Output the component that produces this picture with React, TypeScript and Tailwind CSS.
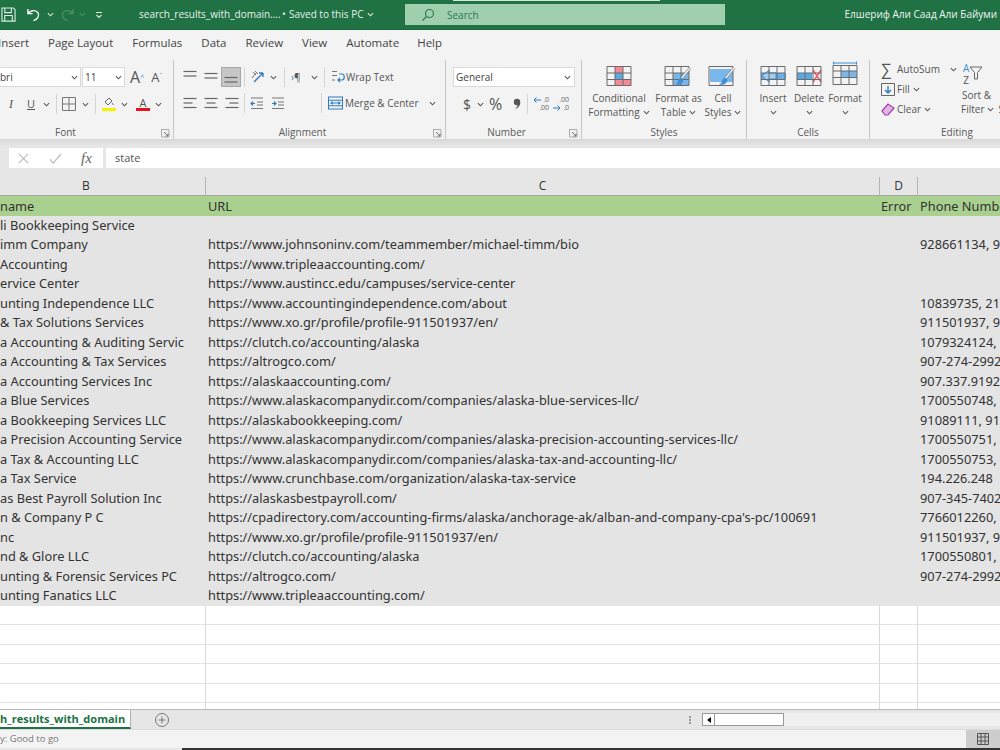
import React from "react";

const rows: [string, string, string][] = [
  ["li Bookkeeping Service", "", ""],
  ["imm Company", "https://www.johnsoninv.com/teammember/michael-timm/bio", "928661134, 9"],
  ["Accounting", "https://www.tripleaaccounting.com/", ""],
  ["ervice Center", "https://www.austincc.edu/campuses/service-center", ""],
  ["unting Independence LLC", "https://www.accountingindependence.com/about", "10839735, 21"],
  ["& Tax Solutions Services", "https://www.xo.gr/profile/profile-911501937/en/", "911501937, 9"],
  ["a Accounting & Auditing Servic", "https://clutch.co/accounting/alaska", "1079324124,"],
  ["a Accounting & Tax Services", "https://altrogco.com/", "907-274-2992"],
  ["a Accounting Services Inc", "https://alaskaaccounting.com/", "907.337.9192"],
  ["a Blue Services", "https://www.alaskacompanydir.com/companies/alaska-blue-services-llc/", "1700550748,"],
  ["a Bookkeeping Services LLC", "https://alaskabookkeeping.com/", "91089111, 91"],
  ["a Precision Accounting Service", "https://www.alaskacompanydir.com/companies/alaska-precision-accounting-services-llc/", "1700550751,"],
  ["a Tax & Accounting LLC", "https://www.alaskacompanydir.com/companies/alaska-tax-and-accounting-llc/", "1700550753,"],
  ["a Tax Service", "https://www.crunchbase.com/organization/alaska-tax-service", "194.226.248"],
  ["as Best Payroll Solution Inc", "https://alaskasbestpayroll.com/", "907-345-7402"],
  ["n & Company P C", "https://cpadirectory.com/accounting-firms/alaska/anchorage-ak/alban-and-company-cpa's-pc/100691", "7766012260,"],
  ["nc", "https://www.xo.gr/profile/profile-911501937/en/", "911501937, 9"],
  ["nd & Glore LLC", "https://clutch.co/accounting/alaska", "1700550801,"],
  ["unting & Forensic Services PC", "https://altrogco.com/", "907-274-2992"],
  ["unting Fanatics LLC", "https://www.tripleaaccounting.com/", ""],
];

const cols = "grid grid-cols-[206px_674px_38px_82px]";

function Chev({ className = "", color = "#555" }: { className?: string; color?: string }) {
  return (
    <svg viewBox="0 0 8 5" className={`w-[7px] h-[5px] shrink-0 ${className}`} fill="none" stroke={color} strokeWidth="1.2">
      <path d="M1 1l3 3 3-3" />
    </svg>
  );
}

function Lines({ kind, y, className = "" }: { kind: "l" | "c" | "r" | "f"; y: number; className?: string }) {
  const seg = (i: number, short: boolean) => {
    const yy = y + i * 4.5;
    const w = short ? 9 : 13;
    const x = kind === "l" || !short ? 0.5 : kind === "c" ? 2.5 : 4.5;
    return <path key={i} d={`M${x} ${yy}h${w}`} />;
  };
  return (
    <svg viewBox="0 0 14 14" className={`w-[14px] h-[14px] shrink-0 ${className}`} fill="none" stroke="#666" strokeWidth="1.2">
      {kind === "f" ? [0, 1].map((i) => seg(i, false)) : [0, 1, 2].map((i) => seg(i, i === 1))}
    </svg>
  );
}

function Sep({ className = "" }: { className?: string }) {
  return <div className={`w-px h-[20px] bg-[#d4d4d4] shrink-0 ${className}`} />;
}

function Launcher() {
  return (
    <svg viewBox="0 0 9 9" className="absolute right-[3px] bottom-[1px] w-[9px] h-[9px]" fill="none" stroke="#777" strokeWidth="1">
      <path d="M.5 8V.5H8V8H.5" stroke="#aaa" />
      <path d="M3 3l4 4M7 4.5V7H4.5" />
    </svg>
  );
}

function Group({ width, label, launcher, children, labelClass = "" }: { width: string; label: string; launcher?: boolean; children: React.ReactNode; labelClass?: string }) {
  return (
    <div className={`${width} shrink-0 flex flex-col h-[79px] border-r border-[#c6c6c6] relative`}>
      <div className="flex-1 min-h-0 flex flex-col">{children}</div>
      <div className={`h-[14px] text-[10px] leading-[14px] text-center text-[#5a5a5a] ${labelClass}`}>{label}</div>
      {launcher && <Launcher />}
    </div>
  );
}

function GridIcon({ children, className = "w-[26px] h-[22px]", vb = "0 0 26 22" }: { children?: React.ReactNode; className?: string; vb?: string }) {
  return (
    <svg viewBox={vb} className={`${className} shrink-0`} fill="none">
      {children}
      <path d="M1 1.5h24v19H1zM1 8h24M1 14.5h24M9 1.5v19M17 1.5v19" stroke="#6b6b6b" strokeWidth="1" />
    </svg>
  );
}

function Big({ lines, children, width }: { lines: string[]; children: React.ReactNode; width: string }) {
  return (
    <div className={`${width} shrink-0 flex flex-col items-center`}>
      <div className="h-[26px] flex items-start justify-center">{children}</div>
      <div className="text-[10px] leading-[14px] text-[#555] text-center whitespace-nowrap">{lines[0]}</div>
      <div className="text-[10px] leading-[14px] text-[#555] flex items-center justify-center gap-[3px] whitespace-nowrap h-[14px]">
        {lines[1]}
        <Chev />
      </div>
    </div>
  );
}

function Brush() {
  return (
    <g>
      <path d="M26 3L17 14" stroke="#777" strokeWidth="2.6" />
      <path d="M26 3L17 14" stroke="#fff" strokeWidth="1.2" />
      <path d="M18 13c-3 0-4 2-4.500 4.500-.3 1.500-2 1.500-3 1.500 2 1.500 8 1.500 9-4z" fill="#3c8fd4" />
    </g>
  );
}

export default function App() {
  return (
    <div className="w-[1000px] h-[750px] overflow-hidden flex flex-col relative bg-[#e6e6e6] font-['Open_Sans','Noto_Sans',sans-serif]">
      {/* Title bar */}
      <div className="h-[30px] shrink-0 bg-[#207245] flex items-center text-white relative border-b border-[#1b6a3f]">
        <div className="absolute top-0 left-[453px] w-[207px] h-px bg-[#d8e6dc]" />
        <svg viewBox="0 0 16 16" className="w-[15px] h-[15px] ml-[1px]" fill="none" stroke="#d9ebe0" strokeWidth="1.2">
          <path d="M1 1h12l2 2v12H1zM4 1v5h7V1M4 15v-6h8v6" />
        </svg>
        <svg viewBox="0 0 16 16" className="w-[15px] h-[15px] ml-[10px]" fill="none" stroke="#fff" strokeWidth="1.4">
          <path d="M2 2v5h5M2.500 7C5 3 11 3 13 6.500 14.500 10 12 13 8 14.500" />
        </svg>
        <Chev className="ml-[6px]" color="#d9ebe0" />
        <svg viewBox="0 0 16 16" className="w-[15px] h-[15px] ml-[6px]" fill="none" stroke="#4f8e6b" strokeWidth="1.4">
          <path d="M14 2v5H9M13.500 7C11 3 5 3 3 6.500 1.500 10 4 13 8 14.500" />
        </svg>
        <Chev className="ml-[4px]" color="#4f8e6b" />
        <svg viewBox="0 0 8 8" className="w-[8px] h-[8px] ml-[9px]" fill="none" stroke="#d9ebe0" strokeWidth="1.1">
          <path d="M1 1.500h6M1.500 4l2.500 2.500L6.500 4" />
        </svg>
        <span className="ml-[36px] text-[10px] text-[#e6f1ea] whitespace-nowrap w-[143px]">search_results_with_domain....</span>
        <span className="text-[10px] text-[#e6f1ea] whitespace-nowrap w-[7px]">•</span>
        <span className="text-[10px] text-[#e6f1ea] whitespace-nowrap">Saved to this PC</span>
        <Chev className="ml-[4px]" color="#e6f1ea" />
        <div className="absolute left-[405px] top-[4px] w-[320px] h-[21px] bg-[#a0cfb0] flex items-center text-[#2d7a50]">
          <svg viewBox="0 0 14 14" className="w-[14px] h-[14px] ml-[16px]" fill="none" stroke="#2d7a50" strokeWidth="1.2">
            <circle cx="8.500" cy="5.500" r="4" />
            <path d="M5.500 8.500L1.500 12.500" />
          </svg>
          <span className="ml-[12px] text-[10px] mt-[1px]">Search</span>
        </div>
        <span className="ml-auto mr-[3px] text-[10px] text-[#eef5f0] whitespace-nowrap">Елшериф Али Саад Али Байуми</span>
      </div>

      {/* Tabs */}
      <div className="h-[27px] shrink-0 bg-[#f3f3f3] flex items-center pb-[1px] text-[11.5px] text-[#444] whitespace-nowrap">
        <span className="-ml-[2px]">Insert</span>
        <span className="ml-[19px]">Page Layout</span>
        <span className="ml-[19px]">Formulas</span>
        <span className="ml-[19px]">Data</span>
        <span className="ml-[19px]">Review</span>
        <span className="ml-[19px]">View</span>
        <span className="ml-[19px]">Automate</span>
        <span className="ml-[18px]">Help</span>
      </div>

      {/* Ribbon */}
      <div className="h-[82px] shrink-0 bg-[#f3f3f3] flex pt-[3px] text-[#444]">
        {/* Font */}
        <Group width="w-[174px]" label="Font" launcher labelClass="pr-[42px]">
          <div className="flex items-center h-[20px] mt-[7px]">
            <div className="w-[81px] h-[20px] bg-white border border-[#dadada] border-l-0 flex items-center text-[10px]">
              bri
              <Chev className="ml-auto mr-[2px]" />
            </div>
            <div className="ml-[1px] w-[43px] h-[20px] bg-white border border-[#dadada] flex items-center text-[10px] pl-[2px]">
              11
              <Chev className="ml-auto mr-[2px]" />
            </div>
            <span className="ml-[5px] text-[16px] text-[#555] leading-none">A<sup className="text-[#3c8fd4] text-[7px]">^</sup></span>
            <span className="ml-[7px] text-[13px] text-[#555] leading-none">A<sup className="text-[#3c8fd4] text-[7px]">ˇ</sup></span>
          </div>
          <div className="flex items-center h-[20px] mt-[7px]">
            <span className="ml-[9px] w-[6px] font-['Liberation_Serif',serif] italic text-[12px] text-[#555]">I</span>
            <span className="ml-[12px] w-[10px] underline text-[11px] text-[#555]">U</span>
            <Chev className="ml-[6px]" />
            <Sep className="ml-[6px]" />
            <svg viewBox="0 0 14 14" className="w-[14px] h-[14px] ml-[5px]" fill="none" stroke="#777" strokeWidth="1">
              <path d="M.5.5h13v13H.5zM7 .5v13M.5 7h13" />
            </svg>
            <Chev className="ml-[6px]" />
            <Sep className="ml-[6px]" />
            <div className="ml-[6px] flex flex-col items-center w-[14px]">
              <svg viewBox="0 0 12 10" className="w-[12px] h-[10px]" fill="none" stroke="#666" strokeWidth="1">
                <path d="M6 1L2 5l3 3 4-4zM9 6l1.500 2" />
              </svg>
              <div className="w-[14px] h-[3px] bg-[#f5f000] mt-[1px]" />
            </div>
            <Chev className="ml-[5px]" />
            <div className="ml-[8px] flex flex-col items-center w-[14px]">
              <span className="text-[11px] leading-[11px] text-[#555]">A</span>
              <div className="w-[14px] h-[3px] bg-[#e8101c]" />
            </div>
            <Chev className="ml-[5px]" />
          </div>
        </Group>

        {/* Alignment */}
        <Group width="w-[272px]" label="Alignment" launcher labelClass="pr-[14px]">
          <div className="flex items-center h-[20px] mt-[7px]">
            <Lines kind="f" y={1.5} className="ml-[9px]" />
            <Lines kind="f" y={3.5} className="ml-[7px]" />
            <div className="ml-[3px] w-[20px] h-[20px] bg-[#c6c6c6] border border-[#a8a8a8] flex items-center justify-center">
              <Lines kind="f" y={7.5} />
            </div>
            <Sep className="ml-[3px]" />
            <svg viewBox="0 0 15 14" className="w-[15px] h-[14px] ml-[5px]" fill="none" stroke="#777" strokeWidth="1">
              <path d="M2 8l5-6M3 2l3 3M5 1l3 3" />
              <path d="M4 12L13 3M13 3H9M13 3v4" stroke="#2c7cc4" strokeWidth="1.400" />
            </svg>
            <Chev className="ml-[5px]" />
            <Sep className="ml-[7px]" />
            <span className="ml-[6px] text-[10px] w-[14px] text-[#555] whitespace-nowrap leading-none"><span className="text-[#2c7cc4]">›</span>¶</span>
            <Chev className="ml-[6px]" />
            <Sep className="ml-[6px]" />
            <span className="ml-[6px] flex items-center w-[14px] h-[16px]">
              <svg viewBox="0 0 14 14" className="w-[14px] h-[14px]" fill="none" stroke="#2c7cc4" strokeWidth="1.2">
                <path d="M1 1.500h5M1 5.500h5M1 10h3" stroke="#777" />
                <path d="M8 4h3c3 0 3 6 0 6H7M9 8l-2 2 2 2" />
              </svg>
            </span>
            <span className="ml-[1px] text-[10px] text-[#555] whitespace-nowrap">Wrap Text</span>
          </div>
          <div className="flex items-center h-[20px] mt-[6px]">
            <Lines kind="l" y={2.5} className="ml-[9px]" />
            <Lines kind="c" y={2.5} className="ml-[7px]" />
            <Lines kind="r" y={2.5} className="ml-[7px]" />
            <Sep className="ml-[5px]" />
            <svg viewBox="0 0 14 14" className="w-[14px] h-[14px] ml-[5px]" fill="none" stroke="#777" strokeWidth="1.1">
              <path d="M1 2h12M7 6h6M7 9h6M1 12.500h12" />
              <path d="M5 7.500H1M3 5.500l-2 2 2 2" stroke="#2c7cc4" />
            </svg>
            <svg viewBox="0 0 14 14" className="w-[14px] h-[14px] ml-[7px]" fill="none" stroke="#777" strokeWidth="1.1">
              <path d="M1 2h12M7 6h6M7 9h6M1 12.500h12" />
              <path d="M1 7.500h4M3 5.500l2 2-2 2" stroke="#2c7cc4" />
            </svg>
            <div className="w-[37px] shrink-0 flex justify-end"><Sep /></div>
            <svg viewBox="0 0 16 14" className="w-[15px] h-[14px] ml-[6px]" fill="none" strokeWidth="1.1">
              <path d="M.5.5h15v13H.5z" stroke="#2c7cc4" />
              <path d="M1 4h14M1 10h14" stroke="#2c7cc4" />
              <path d="M3 7h10M5 5.500L3 7l2 1.500M11 5.500L13 7l-2 1.500" stroke="#2c7cc4" />
            </svg>
            <span className="ml-[2px] text-[10px] text-[#555] whitespace-nowrap w-[84px]">Merge &amp; Center</span>
            <Chev />
          </div>
        </Group>

        {/* Number */}
        <Group width="w-[136px]" label="Number" launcher labelClass="pr-[14px]">
          <div className="mt-[7px] ml-[7px] w-[122px] h-[20px] bg-white border border-[#dadada] flex items-center text-[10px] pl-[2px] shrink-0">
            General
            <Chev className="ml-auto mr-[3px]" />
          </div>
          <div className="flex items-center h-[20px] mt-[7px]">
            <span className="ml-[17px] text-[14px] w-[9px] text-[#555]">$</span>
            <Chev className="ml-[5px]" />
            <span className="ml-[5px] text-[16px] w-[14px] text-[#555] leading-none">%</span>
            <svg viewBox="0 0 8 12" className="ml-[10px] w-[8px] h-[12px]" fill="#555">
              <circle cx="4" cy="4" r="3.200" />
              <path d="M5 5c1.500 0 2.200-1 2.200-1C7.500 7 5.500 10 2 11.500 4 9 5 7.500 5 5z" />
            </svg>
            <Sep className="ml-[6px]" />
            <div className="ml-[5px] w-[16px] flex flex-col text-[7px] leading-[8px] text-[#666]">
              <div className="flex items-center justify-between h-[8px]">
                <svg viewBox="0 0 8 6" className="w-[8px] h-[6px]" fill="none" stroke="#2c7cc4"><path d="M8 3H1M3.500 .5L1 3l2.500 2.500" /></svg>
                <span>.0</span>
              </div>
              <div className="text-right h-[8px]">.00</div>
            </div>
            <div className="ml-[4px] w-[16px] flex flex-col text-[7px] leading-[8px] text-[#666]">
              <div className="text-right h-[8px]">.00</div>
              <div className="flex items-center justify-between h-[8px]">
                <svg viewBox="0 0 8 6" className="w-[8px] h-[6px]" fill="none" stroke="#2c7cc4"><path d="M0 3h7M4.500 .5L7 3 4.500 5.500" /></svg>
                <span>.0</span>
              </div>
            </div>
          </div>
        </Group>

        {/* Styles */}
        <Group width="w-[165px]" label="Styles">
          <div className="flex mt-[5px]">
            <Big width="w-[74px]" lines={["Conditional", "Formatting"]}>
              <GridIcon>
                <path d="M9 1.500h8V8H9zM9 14.500h16v6H9zM9 8h8v6.500H9z" fill="#f58a94" />
                <path d="M9 8h8v6.500H9z" fill="#5ba8e4" />
              </GridIcon>
            </Big>
            <Big width="w-[45px]" lines={["Format as", "Table"]}>
              <svg viewBox="0 0 30 24" className="w-[30px] h-[24px]" fill="none">
                <path d="M9 8h16v12H9z" fill="#79b7ea" />
                <path d="M1 1.500h24v19H1zM1 8h24M1 14.500h24M9 1.500v19M17 1.500v19" stroke="#6b6b6b" />
                <Brush />
              </svg>
            </Big>
            <Big width="w-[44px]" lines={["Cell", "Styles"]}>
              <svg viewBox="0 0 30 24" className="w-[30px] h-[24px]" fill="none">
                <path d="M2 4h23v13H2z" fill="#79b7ea" />
                <path d="M1 1.500h24v19H1z" stroke="#6b6b6b" />
                <Brush />
              </svg>
            </Big>
          </div>
        </Group>

        {/* Cells */}
        <Group width="w-[123px]" label="Cells">
          <div className="flex mt-[5px] pl-[8px]">
            <Big width="w-[36px]" lines={["Insert", ""]}>
              <GridIcon>
                <path d="M1 8h26v6.500H1z" fill="#69aee6" />
                <path d="M9 5l-7 6 7 6v-3h7V8H9z" fill="#9fd0f3" stroke="#3c8fd4" />
              </GridIcon>
            </Big>
            <Big width="w-[36px]" lines={["Delete", ""]}>
              <GridIcon>
                <path d="M1 8h15v6.500H1z" fill="#5ba8e4" />
                <path d="M17 5l8 12M25 5l-8 12" stroke="#ef5f6b" strokeWidth="1.500" />
              </GridIcon>
            </Big>
            <Big width="w-[36px]" lines={["Format", ""]}>
              <svg viewBox="0 0 26 24" className="w-[26px] h-[24px] -mt-[4px]" fill="none">
                <path d="M1 2h24M1.500 .5v3M24.500 .5v3" stroke="#3c8fd4" />
                <path d="M9 10h16v6H9z" fill="#79b7ea" />
                <path d="M1 4.500h24v19H1zM1 10h24M1 16.500h24M9 4.500v19M17 4.500v19" stroke="#6b6b6b" />
              </svg>
            </Big>
          </div>
        </Group>

        {/* Editing */}
        <div className="w-[130px] shrink-0 flex flex-col h-[79px] overflow-hidden">
          <div className="flex-1 flex -mt-[1px] min-h-0">
            <div className="flex flex-col pl-[11px] w-[90px] text-[10px] text-[#555] shrink-0">
              <div className="h-[20px] flex items-center">
                <span className="text-[16px] w-[14px] leading-none">∑</span>
                <span className="ml-[2px] whitespace-nowrap">AutoSum</span>
                <Chev className="ml-[10px]" />
              </div>
              <div className="h-[20px] flex items-center">
                <svg viewBox="0 0 14 13" className="w-[14px] h-[13px]" fill="none">
                  <path d="M.5.5h13v12H.5z" stroke="#666" />
                  <path d="M7 3v7M4 7l3 3 3-3" stroke="#2c7cc4" strokeWidth="1.400" />
                </svg>
                <span className="ml-[2px]">Fill</span>
                <Chev className="ml-[3px]" />
              </div>
              <div className="h-[20px] flex items-center">
                <svg viewBox="0 0 14 13" className="w-[14px] h-[13px]" fill="none">
                  <path d="M1 8l6-7 6 4-6 7H4z" fill="#e2b3e4" stroke="#a33fb0" strokeWidth="1.200" />
                </svg>
                <span className="ml-[2px]">Clear</span>
                <Chev className="ml-[3px]" />
              </div>
            </div>
            <div className="flex flex-col items-start text-[10px] text-[#555] shrink-0 pt-[3px]">
              <div className="h-[26px] flex items-start pl-[3px]">
                <div className="flex flex-col leading-[12px] text-[10px] text-center">
                  <span className="text-[#3c8fd4]">A</span>
                  <span>Z</span>
                </div>
                <svg viewBox="0 0 14 14" className="w-[14px] h-[14px] mt-[4px]" fill="none" stroke="#666">
                  <path d="M1 1h12L8.500 6.500V13h-3V6.500z" />
                </svg>
              </div>
              <div className="leading-[14px] whitespace-nowrap pl-[2px]">Sort &amp;</div>
              <div className="leading-[14px] flex items-center gap-[3px] whitespace-nowrap pl-[1px]">
                Filter<Chev /><span className="ml-[1px]">S</span>
              </div>
            </div>
          </div>
          <div className="h-[14px] text-[10px] leading-[14px] text-center text-[#5a5a5a] pl-[4px] whitespace-nowrap -mr-[40px]">Editing</div>
        </div>
      </div>

      {/* Shadow band */}
      <div className="h-[8px] shrink-0 bg-gradient-to-b from-[#d8d8d8] to-[#e8e8e8]" />

      {/* Formula bar */}
      <div className="h-[30px] shrink-0 bg-[#e6e6e6] flex items-start pt-[1px]">
        <div className="ml-[9px] w-[94px] h-[20px] bg-white flex items-center text-[#aaa]">
          <svg viewBox="0 0 12 12" className="w-[11px] h-[11px] ml-[9px]" fill="none" stroke="#bbb" strokeWidth="1.300">
            <path d="M1 1l10 10M11 1L1 11" />
          </svg>
          <svg viewBox="0 0 14 12" className="w-[13px] h-[11px] ml-[20px]" fill="none" stroke="#bbb" strokeWidth="1.400">
            <path d="M1 7l3.500 4L13 1" />
          </svg>
          <span className="ml-[19px] text-[15px] font-['Liberation_Serif',serif] italic text-[#666] leading-none">fx</span>
        </div>
        <div className="ml-[3px] flex-1 h-[20px] bg-white flex items-center pl-[9px] text-[11px] text-[#555]">state</div>
      </div>

      {/* Column headers */}
      <div className={`${cols} h-[19px] shrink-0 bg-[#e6e6e6] border-b border-[#a6a6a6] text-[12px] text-[#333]`}>
        <div className="border-r border-[#b4b4b4] text-center leading-[18px] pr-[33px]">B</div>
        <div className="border-r border-[#b4b4b4] text-center leading-[18px]">C</div>
        <div className="border-r border-[#b4b4b4] text-center leading-[18px]">D</div>
        <div />
      </div>

      {/* Data */}
      <div className="flex-1 min-h-0 bg-white overflow-hidden text-[12.8px] text-[#333] whitespace-nowrap font-['Noto_Sans','Open_Sans',sans-serif]">
        <div className={`${cols} h-[19.5px] bg-[#a9d08e] leading-[20.5px]`}>
          <div className="overflow-hidden">name</div>
          <div className="pl-[2px]">URL</div>
          <div className="pl-[1px]">Error</div>
          <div className="pl-[2px] overflow-hidden">Phone Numbers</div>
        </div>
        {rows.map((r, i) => (
          <div key={i} className={`${cols} h-[19.5px] bg-[#e4e4e4] leading-[19.5px]`}>
            <div className="overflow-hidden">{r[0]}</div>
            <div className="pl-[2px] overflow-hidden">{r[1]}</div>
            <div />
            <div className="pl-[2px] overflow-hidden">{r[2]}</div>
          </div>
        ))}
        {[0, 1, 2, 3, 4, 5].map((i) => (
          <div key={i} className={`${cols} h-[19.5px] border-b border-[#e2e2e2]`}>
            <div className="border-r border-[#d8d8d8]" />
            <div className="border-r border-[#d8d8d8]" />
            <div className="border-r border-[#d8d8d8]" />
            <div />
          </div>
        ))}
      </div>

      {/* Sheet tabs */}
      <div className="h-[20px] shrink-0 bg-[#e6e6e6] border-t border-[#b8b8b8] flex items-center">
        <div className="w-[131px] h-[19px] bg-white border-r border-[#b0b0b0] border-b-2 border-b-[#207245] text-[11px] font-bold text-[#207245] whitespace-nowrap overflow-hidden leading-[17px]">
          h_results_with_domain
        </div>
        <svg viewBox="0 0 14 14" className="w-[14px] h-[14px] ml-[24px]" fill="none" stroke="#777">
          <circle cx="7" cy="7" r="6.500" />
          <path d="M7 3.500v7M3.500 7h7" />
        </svg>
        <div className="ml-[520px] flex flex-col gap-[1px] w-[2px]">
          {[0, 1, 2].map((i) => <div key={i} className="w-[2px] h-[2px] bg-[#999]" />)}
        </div>
        <div className="ml-[11px] w-[13px] h-[13px] bg-white border border-[#999] flex items-center justify-center">
          <div className="w-0 h-0 border-y-[3.5px] border-y-transparent border-r-[4px] border-r-black" />
        </div>
        <div className="w-[69px] h-[13px] bg-white border border-[#999] border-l-0" />
        <div className="flex-1 h-[13px] bg-[#f0f0f0]" />
      </div>

      {/* Status bar */}
      <div className="h-[19px] shrink-0 bg-[#f3f3f3] border-t border-[#dcdcdc] flex items-center text-[9.5px] text-[#777]">
        <span className="whitespace-nowrap">y: Good to go</span>
        <div className="ml-auto w-[34px] h-full bg-[#cdcdcd] flex items-center justify-center">
          <svg viewBox="0 0 12 12" className="w-[12px] h-[12px]" fill="none" stroke="#555" strokeWidth="1">
            <path d="M.5.5h11v11H.5zM.5 4h11M.5 8h11M4 .5v11M8 .5v11" />
          </svg>
        </div>
      </div>
      <div className="h-[2px] shrink-0 flex">
        <div className="w-[182px] bg-[#e6e6e6]" />
        <div className="flex-1 bg-[#333]" />
      </div>
    </div>
  );
}
